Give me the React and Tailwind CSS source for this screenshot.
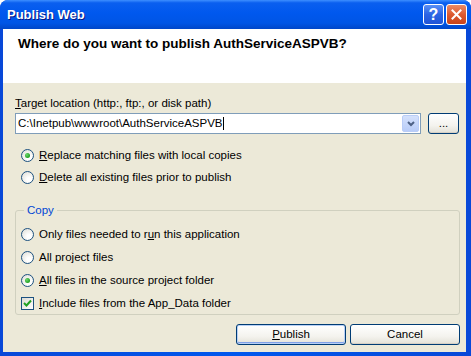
import React from "react";

const font = "font-['Liberation_Sans',Arial,sans-serif]";

const Radio = ({ checked }) => (
  <span className="relative w-[13px] h-[13px] rounded-full border border-[#1C5180] bg-[radial-gradient(circle_at_65%_70%,#FFFFFF_20%,#DCDBD3_100%)] flex items-center justify-center shrink-0">
    {checked && (
      <span className="w-[5px] h-[5px] rounded-full bg-[radial-gradient(circle_at_35%_35%,#6ED66E,#21A121_70%)]" />
    )}
  </span>
);

const Check = () => (
  <span className="w-[13px] h-[13px] border border-[#1C5180] bg-[linear-gradient(135deg,#DCDBD3,#FFFFFF)] flex items-center justify-center shrink-0">
    <svg width="9" height="9" viewBox="0 0 9 9">
      <path d="M1 4 L3.5 6.5 L8 1.5" stroke="#21A121" strokeWidth="2" fill="none" />
    </svg>
  </span>
);

const Option = ({ children, checked, box }) => (
  <div className="flex items-center h-[13px] gap-[5px]">
    {box ? <Check /> : <Radio checked={checked} />}
    <span>{children}</span>
  </div>
);

const XpButton = ({ children, def, className = "" }) => (
  <button
    className={`h-[21px] rounded-[3px] border border-[#003C74] bg-[linear-gradient(180deg,#FFFFFF_0%,#F4F3EE_60%,#E3E1D7_100%)] text-black text-[11.5px] ${
      def ? "shadow-[inset_0_0_0_1px_#B8D0F5,inset_0_-1px_0_1px_#7FA0E8]" : "shadow-[inset_0_-1px_0_#D6D0C5]"
    } ${className}`}
  >
    {children}
  </button>
);

export default function App() {
  return (
    <div className={`w-[471px] h-[356px] bg-white ${font}`}>
      <div className="w-full h-full rounded-t-[8px] bg-[linear-gradient(90deg,#0848D8,#0058EE_50%,#0848D8)] flex flex-col overflow-hidden">
        {/* title bar */}
        <div className="h-[29px] shrink-0 flex items-center pl-[7px] pr-[4px] bg-[linear-gradient(180deg,#3D8FFF_0%,#0A5FEF_10%,#0058EE_45%,#0055E5_80%,#0046C8_100%)]">
          <span className="text-white font-bold text-[13px] [text-shadow:1px_1px_0_#0A1883]">
            Publish Web
          </span>
          <div className="ml-auto flex gap-[2px]">
            <div className="w-[21px] h-[21px] rounded-[3px] border border-white bg-[linear-gradient(180deg,#5A8FF5,#2B64E4_50%,#2154D6)] flex items-center justify-center text-white font-bold text-[16px] leading-none">
              ?
            </div>
            <div className="w-[21px] h-[21px] rounded-[3px] border border-white bg-[linear-gradient(180deg,#EB8B67,#DC5A30_50%,#C8431A)] flex items-center justify-center">
              <svg width="11" height="11" viewBox="0 0 11 11">
                <path d="M1.5 1.5 L9.5 9.5 M9.5 1.5 L1.5 9.5" stroke="white" strokeWidth="2" strokeLinecap="square" />
              </svg>
            </div>
          </div>
        </div>

        <div className="flex-1 ml-[3px] mr-[5px] mb-[4px] bg-[#ECE9D8] flex flex-col text-[11.5px] leading-[13px] text-black">
          {/* header */}
          <div className="h-[54px] bg-white shrink-0 pl-[15px] pt-[7px]">
            <span className="font-bold text-[13.5px] leading-[16px]">
              Where do you want to publish AuthServiceASPVB?
            </span>
          </div>

          <div className="flex flex-col pl-[12px] pr-[6px] pt-[14px]">
            <div>
              <u>T</u>arget location (http:, ftp:, or disk path)
            </div>
            <div className="flex items-center mt-[3px] gap-[7px]">
              <div className="w-[406px] h-[21px] border border-[#7F9DB9] bg-white flex items-center">
                <span className="pl-[2px] flex-1">
                  C:\Inetpub\wwwroot\AuthServiceASPVB<span className="inline-block w-[1px] h-[13px] bg-black align-middle" />
                </span>
                <div className="w-[17px] h-[17px] mr-[1px] rounded-[2px] border border-[#B9CDF7] bg-[linear-gradient(180deg,#D4E1FC,#B8CCF8)] flex items-center justify-center">
                  <svg width="8" height="6" viewBox="0 0 8 6">
                    <path d="M1 1 L4 4 L7 1" stroke="#4D6185" strokeWidth="2" fill="none" />
                  </svg>
                </div>
              </div>
              <XpButton className="w-[31px] h-[20px] leading-[10px] pb-[2px]">...</XpButton>
            </div>

            <div className="flex flex-col gap-[9px] mt-[15px] pl-[6px]">
              <Option checked>
                <u>R</u>eplace matching files with local copies
              </Option>
              <Option>
                <u>D</u>elete all existing files prior to publish
              </Option>
            </div>

            <fieldset className="mt-[20px] w-[445px] border border-[#D0D0BF] rounded-[3px] pl-[5px] pb-[4px] pt-[11px] flex flex-col">
              <legend className="ml-[3px] px-[3px] text-[#0046D5]">Copy</legend>
              <div className="flex flex-col gap-[10px]">
                <Option>
                  Only files needed to r<u>u</u>n this application
                </Option>
                <Option>
                  All pro<u>j</u>ect files
                </Option>
                <Option checked>
                  <u>A</u>ll files in the source project folder
                </Option>
                <Option box>
                  <u>I</u>nclude files from the App_Data folder
                </Option>
              </div>
            </fieldset>

            <div className="flex justify-end gap-[4px] mt-[9px]">
              <XpButton def className="w-[110px]">
                <u>P</u>ublish
              </XpButton>
              <XpButton className="w-[110px]">Cancel</XpButton>
            </div>
          </div>
        </div>
      </div>
    </div>
  );
}
